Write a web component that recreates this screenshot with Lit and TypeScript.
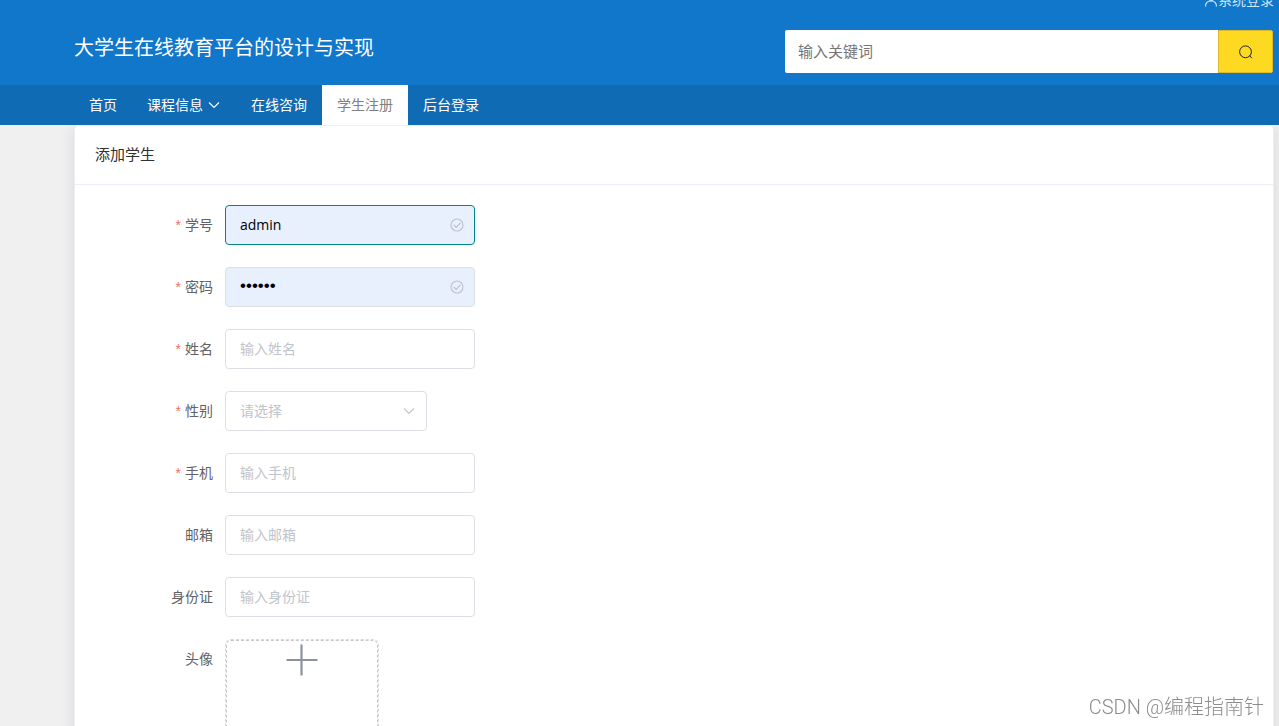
import { LitElement, html, css, svg, nothing } from "lit";
import { customElement, property } from "lit/decorators.js";

interface Field {
  id: string;
  label: string;
  required?: boolean;
  kind?: "text" | "password" | "select" | "upload";
  value?: string;
  placeholder?: string;
  active?: boolean;
}

const FIELDS: Field[] = [
  { id: "student-no", label: "学号", required: true, value: "admin", active: true },
  { id: "password", label: "密码", required: true, kind: "password", value: "123456" },
  { id: "name", label: "姓名", required: true, placeholder: "输入姓名" },
  { id: "gender", label: "性别", required: true, kind: "select", placeholder: "请选择" },
  { id: "mobile", label: "手机", required: true, placeholder: "输入手机" },
  { id: "email", label: "邮箱", placeholder: "输入邮箱" },
  { id: "id-card", label: "身份证", placeholder: "输入身份证" },
  { id: "avatar", label: "头像", kind: "upload" },
];

const NAV = [
  { label: "首页" },
  { label: "课程信息", menu: true },
  { label: "在线咨询" },
  { label: "学生注册", current: true },
  { label: "后台登录" },
];

const chevron = svg`<path d="M2 4.500 7 9.500l5-5" fill="none" stroke="currentColor" stroke-width="1.100" />`;

@customElement("form-field")
export class FormField extends LitElement {
  @property({ attribute: false }) field!: Field;

  static styles = css`
    :host {
      display: block;
      font-size: 14px;
    }
    * {
      box-sizing: border-box;
    }
    .row {
      display: flex;
      align-items: flex-start;
    }
    .label {
      width: 130px;
      padding-right: 12px;
      line-height: 40px;
      text-align: right;
      color: #606266;
    }
    .star {
      margin-right: 4px;
      font-family: "Liberation Sans", sans-serif;
      color: #f56c6c;
    }
    .control {
      display: grid;
      align-items: center;
      width: 250px;
    }
    .control.narrow {
      width: 202px;
    }
    .input {
      grid-area: 1 / 1;
      width: 100%;
      height: 40px;
      margin: 0;
      padding: 0 14px 2px;
      border: 1px solid #dcdfe6;
      border-radius: 4px;
      outline: none;
      appearance: none;
      background: #fff;
      font: inherit;
      color: #c0c4cc;
    }
    .input::placeholder {
      color: #c0c4cc;
      opacity: 1;
    }
    .input.filled {
      background: #e8f0fe;
      color: #000;
    }
    .input.secret {
      font-family: "Liberation Sans", sans-serif;
      font-size: 17px;
    }
    .input.active {
      border-color: #008489;
    }
    .icon {
      grid-area: 1 / 1;
      justify-self: end;
      width: 14px;
      height: 14px;
      margin-right: 11px;
      color: #c0c4cc;
      pointer-events: none;
    }
    .upload {
      display: block;
      width: 154px;
      padding: 0;
      border: 1px dashed #d9d9d9;
      border-radius: 6px;
      background: #fff;
      color: #8c939d;
    }
    .drop {
      display: flex;
      justify-content: center;
      align-items: flex-start;
      height: 152px;
      padding-top: 3px;
      border: 1px dashed #c8c8c8;
      border-radius: 5px;
    }
    .plus {
      width: 32px;
      height: 32px;
    }
  `;

  private control(f: Field) {
    if (f.kind === "upload") {
      return html`<button class="upload" id=${f.id} type="button" aria-label="头像">
        <span class="drop">
          <svg class="plus" viewBox="0 0 32 32" aria-hidden="true">
            <path d="M15.500 0.500v31M0.500 16h31" fill="none" stroke="currentColor" stroke-width="2.200" />
          </svg>
        </span>
      </button>`;
    }
    if (f.kind === "select") {
      return html`<div class="control narrow">
        <select class="input" id=${f.id}>
          <option>${f.placeholder}</option>
        </select>
        <svg class="icon" viewBox="0 0 14 14" aria-hidden="true">${chevron}</svg>
      </div>`;
    }
    return html`<div class="control">
      <input
        class="input ${f.value ? "filled" : ""} ${f.active ? "active" : ""} ${f.kind === "password" ? "secret" : ""}"
        id=${f.id}
        type=${f.kind ?? "text"}
        .value=${f.value ?? ""}
        placeholder=${f.placeholder ?? nothing}
      />
      ${f.value
        ? html`<svg class="icon" viewBox="0 0 14 14" aria-hidden="true">
            <circle cx="7" cy="7" r="6" fill="none" stroke="currentColor" stroke-width="1.200" />
            <path d="m3.800 7 2.400 2.400 4.300-4.500" fill="none" stroke="currentColor" stroke-width="1.300" />
          </svg>`
        : nothing}
    </div>`;
  }

  render() {
    const f = this.field;
    return html`<div class="row">
      <label class="label" for=${f.id}>${f.required ? html`<span class="star">*</span>` : nothing}${f.label}</label>
      ${this.control(f)}
    </div>`;
  }
}

@customElement("app-root")
export class AppRoot extends LitElement {
  static styles = css`
    :host {
      display: block;
      height: 100vh;
      overflow: hidden;
      background: #f0f0f0;
      font-family: "Open Sans", "Noto Sans CJK SC", sans-serif;
      font-size: 14px;
      color: #303133;
    }
    * {
      box-sizing: border-box;
    }
    .wrap {
      padding: 0 5px 0 74px;
    }
    .header {
      display: flow-root;
      background: #1077cb;
    }
    .topbar {
      display: flex;
      justify-content: flex-end;
      margin-top: -12px;
      line-height: 24px;
    }
    .login {
      display: flex;
      align-items: center;
      color: #d3e6f7;
      text-decoration: none;
    }
    .user {
      width: 14px;
      height: 14px;
    }
    .brand {
      display: flex;
      justify-content: space-between;
      align-items: flex-start;
      padding: 18px 0 12px;
    }
    .title {
      margin: 0;
      font-size: 20px;
      font-weight: 400;
      line-height: 36px;
      color: #fff;
    }
    .search {
      display: flex;
      flex: 0 1 488px;
      height: 43px;
      margin-right: 1px;
    }
    .keyword {
      flex: 1;
      min-width: 0;
      padding: 0 13px 2px;
      border: 0;
      border-radius: 2px 0 0 2px;
      outline: none;
      background: #fff;
      font: inherit;
      font-size: 15px;
      color: #333;
    }
    .keyword::placeholder {
      color: #757575;
      opacity: 1;
    }
    .go {
      display: grid;
      place-items: center;
      width: 55px;
      padding: 0;
      border: 1px solid #dfb92c;
      border-radius: 0 2px 2px 0;
      background: #fdd922;
      color: #222;
    }
    .glass {
      width: 14px;
      height: 14px;
    }
    .nav {
      background: #0f6bb3;
    }
    .menu {
      display: flex;
      margin: 0;
      padding: 0;
      list-style: none;
    }
    .item {
      display: flex;
      align-items: center;
      gap: 4px;
      padding: 0 15px;
      line-height: 40px;
      color: #fff;
      text-decoration: none;
    }
    .item.current {
      background: #fff;
      color: #808080;
    }
    .arrow {
      width: 14px;
      height: 14px;
    }
    .card {
      border: 1px solid #ebeef5;
      border-radius: 4px;
      background: #fff;
      box-shadow: 0 2px 16px rgba(0, 0, 0, 0.1);
      clip-path: inset(0 -20px);
    }
    .heading {
      margin: 0;
      padding: 0 20px 2px;
      border-bottom: 1px solid #ebeef5;
      font-size: 15px;
      font-weight: 400;
      line-height: 56px;
    }
    .form {
      display: grid;
      gap: 22px;
      padding: 20px;
    }
    .mark {
      position: fixed;
      right: 15px;
      bottom: 4px;
      font-family: Roboto, "Noto Sans CJK SC", sans-serif;
      font-size: 20px;
      font-weight: 300;
      line-height: 30px;
      color: #8c8c8c;
      text-shadow: 1px 1px 0 #fff;
    }
  `;

  render() {
    return html`
      <header class="header">
        <div class="wrap">
          <div class="topbar">
            <a class="login" href="#">
              <svg class="user" viewBox="0 0 14 14" aria-hidden="true">
                <g fill="none" stroke="currentColor" stroke-width="1.200">
                  <circle cx="7" cy="4.500" r="3" />
                  <path d="M1.500 13.500c0-3.500 2.300-5.500 5.500-5.500s5.500 2 5.500 5.500" />
                </g>
              </svg>系统登录
            </a>
          </div>
          <div class="brand">
            <h1 class="title">大学生在线教育平台的设计与实现</h1>
            <form class="search">
              <input class="keyword" type="text" placeholder="输入关键词" aria-label="输入关键词" />
              <button class="go" type="button" aria-label="搜索">
                <svg class="glass" viewBox="0 0 14 14" aria-hidden="true">
                  <g fill="none" stroke="currentColor">
                    <circle cx="6.500" cy="6.800" r="5.900" />
                    <path d="m10.500 10.500 2.300 2.700" />
                  </g>
                </svg>
              </button>
            </form>
          </div>
        </div>
      </header>
      <nav class="nav">
        <div class="wrap">
          <ul class="menu">
            ${NAV.map(
              (n) => html`<li>
                <a class="item ${n.current ? "current" : ""}" href="#"
                  >${n.label}${n.menu
                    ? html`<svg class="arrow" viewBox="0 0 14 14" aria-hidden="true">${chevron}</svg>`
                    : nothing}</a
                >
              </li>`
            )}
          </ul>
        </div>
      </nav>
      <main class="wrap">
        <section class="card">
          <h2 class="heading">添加学生</h2>
          <form class="form">${FIELDS.map((f) => html`<form-field .field=${f}></form-field>`)}</form>
        </section>
      </main>
      <div class="mark">CSDN @编程指南针</div>
    `;
  }
}
